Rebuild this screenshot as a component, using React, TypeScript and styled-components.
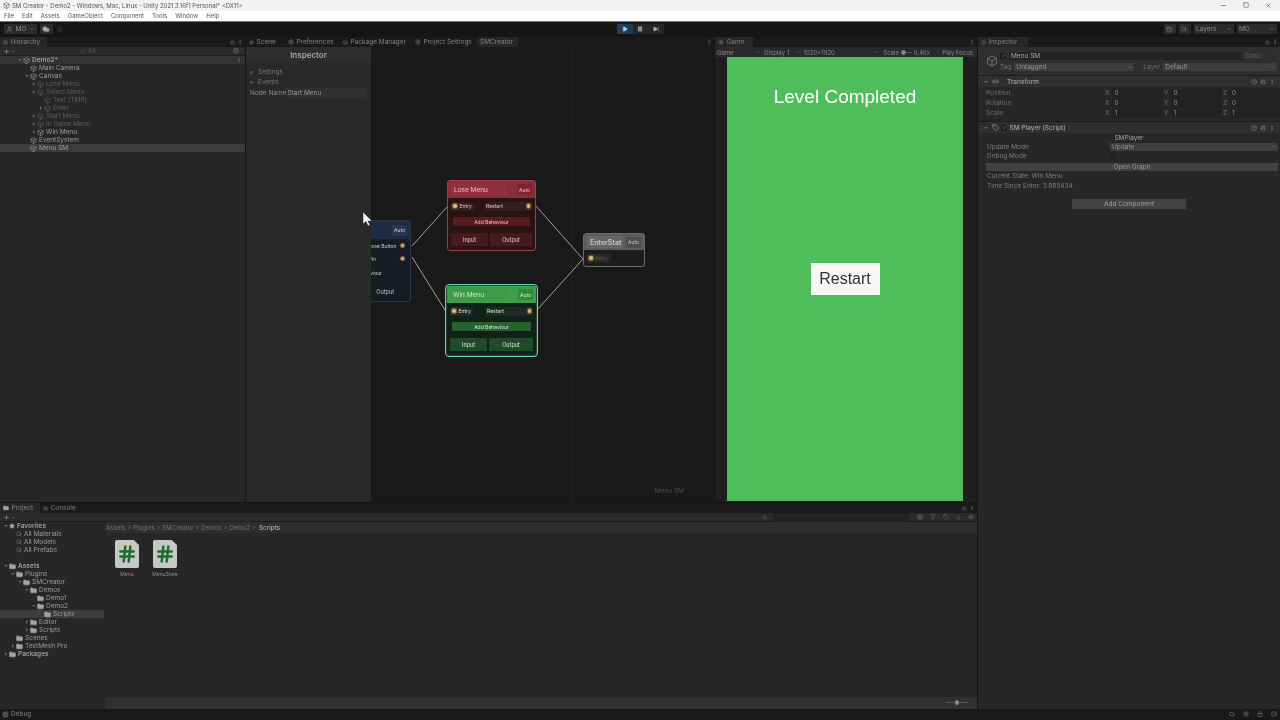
import React from "react";
import styled, { createGlobalStyle } from "styled-components";
import {
  Box,
  Bug,
  Check,
  ChevronDown,
  Cloud,
  Eye,
  Folder,
  Hash,
  History,
  Link2,
  Lock,
  Minus,
  MoreVertical,
  Pause,
  Play,
  Plus,
  Search,
  Settings,
  SkipForward,
  Sliders,
  Square,
  Star,
  Tag,
  User,
  X,
  Grid2x2,
  Filter,
  Layers,
  CircleHelp,
  CircleCheck,
} from "lucide-react";

const GlobalStyle = createGlobalStyle`
  html, body {
    margin: 0;
    width: 1280px;
    height: 720px;
    overflow: hidden;
    background: #191919;
  }
  * { box-sizing: border-box; }
`;

const Root = styled.div`
  width: 1280px;
  height: 720px;
  display: flex;
  flex-direction: column;
  font-family: Inter, "Liberation Sans", sans-serif;
  font-size: 6.5px;
  color: #a0a0a0;
  white-space: nowrap;
  position: relative;
  filter: blur(0.4px);
  will-change: transform;
`;

/* window chrome */
const TitleBar = styled.div`
  height: 11px;
  flex: none;
  background: #f2f2f2;
  display: flex;
  align-items: center;
  padding-left: 3px;
  gap: 2px;
  color: #555;
  font-size: 6px;
`;
const TitleText = styled.span`
  flex: 1;
`;
const WindowButtons = styled.div`
  display: flex;
  gap: 16px;
  padding-right: 8px;
  color: #444;
`;
const MenuBar = styled.div`
  height: 10.5px;
  flex: none;
  background: #fff;
  display: flex;
  align-items: center;
  gap: 8px;
  padding-left: 4px;
  color: #555;
  font-size: 6px;
  border-bottom: 1px solid #777;
`;

const Toolbar = styled.div`
  height: 15.5px;
  flex: none;
  background: #151515;
  display: flex;
  align-items: center;
  padding: 0 0 0 4px;
  position: relative;
`;
const ToolButton = styled.div<{ $w: number; $blue?: boolean }>`
  width: ${(p) => p.$w}px;
  height: 10px;
  background: ${(p) => (p.$blue ? "#1d3a55" : "#2b2b2b")};
  display: flex;
  align-items: center;
  justify-content: space-between;
  padding: 0 2px;
  color: #8e8e8e;
  margin-right: 3px;
`;
const CenterControls = styled.div`
  position: absolute;
  left: 617px;
  top: 2px;
  display: flex;
  background: #222;
`;
const PlayButton = styled.div<{ $active?: boolean }>`
  width: 15.5px;
  height: 10px;
  display: flex;
  align-items: center;
  justify-content: center;
  background: ${(p) => (p.$active ? "#1e3d5a" : "#262626")};
  color: ${(p) => (p.$active ? "#9fd0f0" : "#aaa")};
`;
const Spacer = styled.div`
  flex: 1;
`;

const Workspace = styled.div`
  flex: 1;
  display: flex;
  min-height: 0;
  background: #141414;
`;
const LeftArea = styled.div`
  width: 977px;
  flex: none;
  display: flex;
  flex-direction: column;
`;
const TopArea = styled.div`
  height: 465px;
  flex: none;
  display: flex;
  gap: 1px;
`;

/* shared panel parts */
const Panel = styled.div<{ $w?: number }>`
  ${(p) => (p.$w ? `width: ${p.$w}px; flex: none;` : "flex: 1;")}
  display: flex;
  flex-direction: column;
  background: #272727;
  min-width: 0;
`;
const TabBar = styled.div`
  height: 10px;
  flex: none;
  background: #1a1a1a;
  display: flex;
  align-items: stretch;
  color: #7f7f7f;
`;
const TabItem = styled.div<{ $active?: boolean; $w?: number }>`
  display: flex;
  align-items: center;
  gap: 2.5px;
  padding: 0 3px;
  ${(p) => (p.$w ? `width: ${p.$w}px;` : "")}
  background: ${(p) => (p.$active ? "#272727" : "transparent")};
  color: #828282;
`;
const TabIcons = styled.div`
  margin-left: auto;
  display: flex;
  align-items: center;
  gap: 2px;
  padding-right: 2px;
  color: #777;
`;
const PanelTools = styled.div`
  height: 9px;
  flex: none;
  display: flex;
  align-items: center;
  padding: 0 3px;
  background: #2b2b2b;
  border-bottom: 1px solid #1e1e1e;
  color: #999;
`;
const SearchStub = styled.div<{ $left: number }>`
  margin-left: ${(p) => p.$left}px;
  display: flex;
  align-items: center;
  gap: 3px;
  color: #555;
`;

/* tree rows */
const TreeRow = styled.div<{ $depth: number; $base: number; $selected?: boolean; $dim?: boolean; $bold?: boolean }>`
  height: 8px;
  display: flex;
  align-items: center;
  padding-left: ${(p) => p.$base + p.$depth * 7}px;
  background: ${(p) => (p.$selected ? "#3d3d3d" : "transparent")};
  color: ${(p) => (p.$dim ? "#5c5c5c" : "#9c9c9c")};
  font-weight: ${(p) => (p.$bold ? 600 : 400)};
`;
const Arrow = styled.span<{ $open?: boolean }>`
  width: 6px;
  flex: none;
  display: flex;
  align-items: center;
  justify-content: center;
  &::before {
    content: "";
    display: ${(p) => (p.$open === undefined ? "none" : "block")};
    border-style: solid;
    border-color: transparent;
    ${(p) =>
      p.$open
        ? "border-width: 2.5px 2px 0 2px; border-top-color: #666;"
        : "border-width: 2px 0 2px 2.5px; border-left-color: #666;"}
  }
`;
const RowLabel = styled.span`
  margin-left: 2px;
`;
const RowEnd = styled.span`
  margin-left: auto;
  padding-right: 3px;
  display: flex;
  color: #777;
`;

const hierarchy = [
  { label: "Demo2*", depth: 0, open: true, bold: true, top: true },
  { label: "Main Camera", depth: 1 },
  { label: "Canvas", depth: 1, open: true },
  { label: "Lose Menu", depth: 2, open: false, dim: true },
  { label: "Select Menu", depth: 2, open: false, dim: true },
  { label: "Text (TMP)", depth: 3, dim: true },
  { label: "Enter", depth: 3, open: false, dim: true },
  { label: "Start Menu", depth: 2, open: false, dim: true },
  { label: "In Game Menu", depth: 2, open: false, dim: true },
  { label: "Win Menu", depth: 2, open: false },
  { label: "EventSystem", depth: 1 },
  { label: "Menu SM", depth: 1, selected: true },
];

const projectTree = [
  { label: "Favorites", depth: 0, open: true, bold: true, icon: "star" },
  { label: "All Materials", depth: 1, icon: "search" },
  { label: "All Models", depth: 1, icon: "search" },
  { label: "All Prefabs", depth: 1, icon: "search" },
  { label: "", depth: 0 },
  { label: "Assets", depth: 0, open: true, bold: true, icon: "folder" },
  { label: "Plugins", depth: 1, open: true, icon: "folder" },
  { label: "SMCreator", depth: 2, open: true, icon: "folder" },
  { label: "Demos", depth: 3, open: true, icon: "folder" },
  { label: "Demo1", depth: 4, icon: "folder" },
  { label: "Demo2", depth: 4, open: true, icon: "folder" },
  { label: "Scripts", depth: 5, icon: "folder", selected: true },
  { label: "Editor", depth: 3, open: false, icon: "folder" },
  { label: "Scripts", depth: 3, open: false, icon: "folder" },
  { label: "Scenes", depth: 1, icon: "folder" },
  { label: "TextMesh Pro", depth: 1, open: false, icon: "folder" },
  { label: "Packages", depth: 0, open: false, bold: true, icon: "folder" },
];

const HierarchyRow = styled(TreeRow)<{ $top?: boolean }>`
  background: ${(p) => (p.$selected ? "#3d3d3d" : p.$top ? "#333" : "transparent")};
`;

/* centre panel */
const CenterBody = styled.div`
  flex: 1;
  display: flex;
  min-height: 0;
`;
const GraphSidebar = styled.div`
  width: 125px;
  flex: none;
  background: #292929;
  display: flex;
  flex-direction: column;
`;
const SidebarTitle = styled.div`
  height: 15px;
  display: flex;
  align-items: center;
  justify-content: center;
  background: #2d2d2d;
  font-size: 8px;
  font-weight: 600;
  color: #a5a5a5;
`;
const FoldRow = styled.div<{ $first?: boolean }>`
  height: 10px;
  margin-top: ${(p) => (p.$first ? 5 : 0)}px;
  padding-left: 4px;
  display: flex;
  align-items: center;
  gap: 5px;
  color: #787878;
`;
const FoldMark = styled.span`
  width: 3px;
  height: 3px;
  background: #4a4a4a;
`;
const NodeNameRow = styled.div`
  height: 11px;
  display: flex;
  align-items: center;
  padding-left: 4px;
  color: #8c8c8c;
`;
const NodeNameInput = styled.div`
  flex: 1;
  margin: 0 4px 0 0;
  height: 9px;
  padding-left: 1px;
  background: #303030;
  display: flex;
  align-items: center;
  color: #9a9a9a;
`;

const Graph = styled.div`
  flex: 1;
  position: relative;
  overflow: hidden;
  background: #191919;
`;
const GridLine = styled.div<{ $x: number }>`
  position: absolute;
  left: ${(p) => p.$x}px;
  top: 0;
  bottom: 0;
  width: 1px;
  background: #202020;
`;
const Wires = styled.svg`
  position: absolute;
  inset: 0;
`;
const Watermark = styled.div`
  position: absolute;
  right: 30px;
  bottom: 7px;
  color: #4e4e4e;
`;

type NodeColors = { head: string; title: string; auto: string; body: string; border: string; add: string; btn: string; text: string };
const RED: NodeColors = { head: "#8a2c3b", title: "#93303f", auto: "#80222f", body: "#2a1215", border: "#9c3f4e", add: "#5a1a22", btn: "#481a20", text: "#e0c0c0" };
const GREEN: NodeColors = { head: "#3f9d4b", title: "#3c9a48", auto: "#2f8a3c", body: "#12201a", border: "#1f4a2f", add: "#27612f", btn: "#1f4b28", text: "#cfe8cf" };
const GRAY: NodeColors = { head: "#5c5c5c", title: "#666", auto: "#4e4e4e", body: "#1c1c1c", border: "#6b6b6b", add: "#333", btn: "#333", text: "#c5c5c5" };
const NAVY: NodeColors = { head: "#1f2c44", title: "#1f2c44", auto: "#28364f", body: "#171c24", border: "#2a3548", add: "#1f2530", btn: "#1e2531", text: "#c4cad4" };

const NodeCard = styled.div<{ $x: number; $y: number; $w: number; $c: NodeColors; $glow?: boolean }>`
  position: absolute;
  left: ${(p) => p.$x}px;
  top: ${(p) => p.$y}px;
  width: ${(p) => p.$w}px;
  background: ${(p) => p.$c.body};
  border: 1.5px solid ${(p) => p.$c.border};
  border-radius: 3px;
  color: ${(p) => p.$c.text};
  ${(p) => (p.$glow ? "outline: 1.5px solid #63d6b8; outline-offset: 0.5px;" : "")}
`;
const NodeHead = styled.div<{ $c: NodeColors; $h: number }>`
  height: ${(p) => p.$h}px;
  background: ${(p) => p.$c.head};
  display: flex;
  align-items: center;
  justify-content: space-between;
  padding: 0 3px;
  gap: 3px;
`;
const NodeTitle = styled.div<{ $c: NodeColors; $w: number; $big?: boolean }>`
  width: ${(p) => p.$w}px;
  height: 12px;
  display: flex;
  align-items: center;
  padding-left: 3px;
  background: ${(p) => p.$c.title};
  font-size: ${(p) => (p.$big ? 7 : 6.5)}px;
  font-weight: ${(p) => (p.$big ? 600 : 400)};
`;
const NodeAuto = styled.div<{ $c: NodeColors }>`
  width: 15px;
  height: 11px;
  background: ${(p) => p.$c.auto};
  display: flex;
  align-items: center;
  justify-content: center;
  font-size: 5px;
`;
const PortRow = styled.div`
  height: 16px;
  display: flex;
  align-items: center;
  justify-content: space-between;
  padding: 0 3px;
`;
const Pill = styled.div<{ $w?: number; $faded?: boolean }>`
  display: flex;
  align-items: center;
  gap: 3px;
  height: 9px;
  ${(p) => (p.$w ? `width: ${p.$w}px;` : "")}
  padding: 0 2px;
  background: #ffffff0d;
  border-radius: 2px;
  font-size: 5px;
  color: ${(p) => (p.$faded ? "#6a5f44" : "inherit")};
`;
const Port = styled.span`
  width: 3.5px;
  height: 3.5px;
  border-radius: 50%;
  background: #e2b878;
  box-shadow: 0 0 0 1.2px #6a5a3a;
  flex: none;
  margin-left: auto;
`;
const PortLeft = styled(Port)`
  margin-left: 0;
`;
const AddBar = styled.div<{ $c: NodeColors }>`
  height: 9px;
  margin: 3px 5px 0;
  background: ${(p) => p.$c.add};
  display: flex;
  align-items: center;
  justify-content: center;
  font-size: 5px;
`;
const IoRow = styled.div`
  display: grid;
  grid-template-columns: 37px 1fr;
  gap: 2px;
  margin: 7px 3px 4px;
`;
const IoButton = styled.div<{ $c: NodeColors }>`
  height: 13px;
  background: ${(p) => p.$c.btn};
  display: flex;
  align-items: center;
  justify-content: center;
  font-size: 5.5px;
`;
// rows of the start node, which is cut off by the graph's left edge
const StartLine = styled.div<{ $end: number; $h: number }>`
  height: ${(p) => p.$h}px;
  display: flex;
  align-items: center;
  justify-content: flex-end;
  gap: 4px;
  padding-right: ${(p) => p.$end}px;
  font-size: 5px;
`;
const StartPort = styled(Port)`
  margin-left: 0;
`;
const PortSlot = styled.span<{ $w: number }>`
  width: ${(p) => p.$w}px;
  display: flex;
  justify-content: flex-end;
`;
const StartOutput = styled.div`
  height: 21px;
  padding: 3px 16px 0 0;
  display: flex;
  align-items: center;
  justify-content: flex-end;
  font-size: 5.5px;
`;
const Cursor = styled.svg`
  position: absolute;
  left: 362px;
  top: 211px;
`;

/* game panel */
const GameBar = styled.div`
  height: 10px;
  flex: none;
  display: flex;
  align-items: center;
  padding: 0 0 0 2px;
  background: #2a2a2a;
  font-size: 6px;
  color: #888;
`;
const GameItem = styled.div<{ $w?: number }>`
  ${(p) => (p.$w ? `width: ${p.$w}px;` : "")}
  display: flex;
  align-items: center;
  justify-content: space-between;
  padding-right: 4px;
`;
const GameView = styled.div`
  flex: 1;
  background: #1f1f1f;
  display: flex;
  justify-content: center;
  padding: 0 2px 1px 0;
`;
const GameScreen = styled.div`
  width: 236px;
  background: #4fbe5a;
  display: flex;
  flex-direction: column;
  align-items: center;
`;
const GameTitle = styled.div`
  margin-top: 28px;
  font-family: "Liberation Sans", Arial, sans-serif;
  font-size: 19px;
  line-height: 24px;
  color: #fff;
`;
const RestartButton = styled.div`
  margin-top: 154px;
  width: 69px;
  height: 32px;
  background: #f6f6f6;
  color: #333;
  font-family: "Liberation Sans", Arial, sans-serif;
  font-size: 16px;
  display: flex;
  align-items: center;
  justify-content: center;
`;

/* project panel */
const ProjectPanel = styled(Panel)`
  flex: 1;
  border-top: 1px solid #141414;
`;
const ProjectBody = styled.div`
  flex: 1;
  display: flex;
  min-height: 0;
`;
const ProjectTree = styled.div`
  width: 104px;
  flex: none;
`;
const ProjectFiles = styled.div`
  flex: 1;
  display: flex;
  flex-direction: column;
`;
const Breadcrumb = styled.div`
  height: 11px;
  margin-left: 2px;
  display: flex;
  align-items: center;
  gap: 3px;
  background: #2e2e2e;
  font-size: 6.2px;
  color: #747474;
`;
const CrumbStrong = styled.span`
  color: #9e9e9e;
  font-weight: 600;
`;
const FileGrid = styled.div`
  display: flex;
  gap: 14px;
  padding: 7px 0 0 11px;
`;
const FileItem = styled.div`
  width: 24px;
  display: flex;
  flex-direction: column;
  align-items: center;
  gap: 3px;
  font-size: 5px;
  color: #8a8a8a;
`;
const ScriptIcon = styled.div`
  width: 24px;
  height: 28px;
  background: #c6c9c3;
  border-radius: 2px;
  clip-path: polygon(0 0, 78% 0, 100% 18%, 100% 100%, 0 100%);
  display: flex;
  align-items: center;
  justify-content: center;
  color: #1f6b30;
`;
const ProjectSearch = styled.div`
  position: absolute;
  left: 760px;
  top: 512.5px;
  width: 216px;
  height: 9px;
  display: flex;
  align-items: center;
  padding: 0 2px;
  color: #777;
  gap: 7px;
`;
const SearchField = styled.div`
  flex: 1;
  height: 8px;
  background: #222;
  padding-left: 1px;
`;
const SliderBar = styled.div`
  height: 12px;
  flex: none;
  margin-left: 105px;
  background: #303030;
  display: flex;
  align-items: center;
  justify-content: flex-end;
  padding-right: 9px;
`;
const SliderTrack = styled.div`
  width: 22px;
  height: 1px;
  background: #555;
  display: flex;
  align-items: center;
  justify-content: center;
`;
const SliderThumb = styled.div`
  width: 4px;
  height: 5px;
  border-radius: 50%;
  background: #8c8c8c;
`;

/* inspector */
const InspectorPanel = styled(Panel)`
  border-left: 1px solid #141414;
`;
const ObjectHeader = styled.div`
  height: 28px;
  flex: none;
  display: grid;
  grid-template-columns: 22px 1fr;
  background: #2e2e2e;
`;
const ObjectIcon = styled.div`
  display: flex;
  align-items: center;
  justify-content: center;
  padding-left: 5px;
  color: #9a9a9a;
`;
const ObjectLines = styled.div`
  display: flex;
  flex-direction: column;
  padding: 3px 3px 0 0;
`;
const ObjectLine = styled.div`
  height: 11.5px;
  display: flex;
  align-items: center;
  gap: 3px;
`;
const CheckBox = styled.span`
  width: 6px;
  height: 6px;
  background: #1f1f1f;
  display: flex;
  align-items: center;
  justify-content: center;
  color: #bbb;
  flex: none;
`;
const NameField = styled.div`
  flex: 1;
  height: 8px;
  background: #232323;
  padding-left: 2px;
  display: flex;
  align-items: center;
  color: #a8a8a8;
`;
const StaticLabel = styled.div`
  width: 32px;
  display: flex;
  justify-content: space-between;
  color: #5e5e5e;
`;
const Dropdown = styled.div<{ $w?: number }>`
  ${(p) => (p.$w ? `width: ${p.$w}px;` : "flex: 1;")}
  height: 8px;
  padding: 0 2px;
  background: #3d3d3d;
  display: flex;
  align-items: center;
  justify-content: space-between;
  color: #979797;
`;
const DimLabel = styled.span<{ $pad?: number }>`
  color: #707070;
  padding-left: ${(p) => p.$pad ?? 0}px;
`;
const ComponentHeader = styled.div`
  height: 12px;
  flex: none;
  display: flex;
  align-items: center;
  gap: 2.5px;
  padding: 0 5px;
  background: #2f2f2f;
  border-top: 1px solid #1b1b1b;
  color: #a0a0a0;
  font-weight: 500;
`;
const TransformLabel = styled.span`
  margin-left: 6px;
`;
const HeaderIcons = styled.div`
  margin-left: auto;
  display: flex;
  gap: 3px;
  color: #8a8a8a;
`;
const TransformRows = styled.div`
  padding: 1px 0 3px;
`;
const TransformRow = styled.div`
  height: 10px;
  display: grid;
  grid-template-columns: 119px repeat(3, 59px);
  align-items: center;
  padding-left: 8px;
  color: #6f6f6f;
`;
const AxisField = styled.div`
  display: flex;
  align-items: center;
  gap: 3px;
  padding-right: 1px;
`;
const AxisValue = styled.div`
  flex: 1;
  height: 9px;
  background: #222;
  padding-left: 2px;
  display: flex;
  align-items: center;
  color: #8f8f8f;
`;
const ScriptName = styled.div`
  height: 9px;
  display: flex;
  align-items: center;
  justify-content: center;
  color: #a0a0a0;
`;
const PropRow = styled.div`
  height: 9.5px;
  display: grid;
  grid-template-columns: 123px 1fr;
  align-items: center;
  padding: 0 2px 0 9px;
  color: #7c7c7c;
`;
const DebugToggle = styled.div`
  width: 7px;
  height: 7px;
  background: #232323;
`;
const WideButton = styled.div`
  height: 8px;
  margin: 2px 2px 0 8px;
  background: #414141;
  display: flex;
  align-items: center;
  justify-content: center;
  color: #9a9a9a;
`;
const InfoLine = styled.div`
  height: 10px;
  padding-left: 9px;
  display: flex;
  align-items: center;
  color: #7f7f7f;
`;
const AddComponent = styled.div`
  width: 114px;
  height: 10px;
  margin: 8px 0 0 94px;
  background: #434343;
  color: #a2a2a2;
  display: flex;
  align-items: center;
  justify-content: center;
`;

const StatusBar = styled.div`
  height: 11.5px;
  flex: none;
  background: #191919;
  display: flex;
  align-items: center;
  padding: 0 3px 0 2px;
  gap: 2px;
  color: #868686;
`;
const StatusIcons = styled.div`
  display: flex;
  gap: 8px;
`;

const Icon = ({ kind }: { kind?: string }) => {
  if (kind === "star") return <Star size={6} fill="#a8a8a8" stroke="#a8a8a8" />;
  if (kind === "search") return <Search size={6} stroke="#888" />;
  if (kind === "folder") return <Folder size={7} fill="#a4a4a4" stroke="#a4a4a4" />;
  return null;
};

type NodeProps = { title: string; x: number; y: number; w: number; c: NodeColors; glow?: boolean };

// the big state nodes all share the same inner layout
const StateNode = ({ title, x, y, w, c, glow }: NodeProps) => (
  <NodeCard $x={x} $y={y} $w={w} $c={c} $glow={glow}>
    <NodeHead $c={c} $h={17}>
      <NodeTitle $c={c} $w={56}>{title}</NodeTitle>
      <NodeAuto $c={c}>Auto</NodeAuto>
    </NodeHead>
    <PortRow>
      <Pill $w={23}><PortLeft />Entry</Pill>
      <Pill $w={48}>Restart<Port /></Pill>
    </PortRow>
    <AddBar $c={c}>Add Behaviour</AddBar>
    <IoRow>
      <IoButton $c={c}>Input</IoButton>
      <IoButton $c={c}>Output</IoButton>
    </IoRow>
  </NodeCard>
);

const App = () => {
  return (
    <Root>
      <GlobalStyle />
      <TitleBar>
        <Box size={7} />
        <TitleText>SM Creator - Demo2 - Windows, Mac, Linux - Unity 2021.3.16f1 Personal* &lt;DX11&gt;</TitleText>
        <WindowButtons>
          <Minus size={7} />
          <Square size={6} />
          <X size={7} />
        </WindowButtons>
      </TitleBar>
      <MenuBar>
        {["File", "Edit", "Assets", "GameObject", "Component", "Tools", "Window", "Help"].map((m) => (
          <span key={m}>{m}</span>
        ))}
      </MenuBar>

      <Toolbar>
        <ToolButton $w={33}><User size={7} />MO<ChevronDown size={6} /></ToolButton>
        <ToolButton $w={13}><Cloud size={8} fill="#aaa" /></ToolButton>
        <Settings size={7} stroke="#444" />
        <CenterControls>
          <PlayButton $active><Play size={6} fill="#9fd0f0" /></PlayButton>
          <PlayButton><Pause size={6} fill="#aaa" /></PlayButton>
          <PlayButton><SkipForward size={6} fill="#aaa" /></PlayButton>
        </CenterControls>
        <Spacer />
        <ToolButton $w={12}><History size={7} /></ToolButton>
        <ToolButton $w={12}><Search size={6} /></ToolButton>
        <ToolButton $w={40}>Layers<ChevronDown size={6} /></ToolButton>
        <ToolButton $w={40}>MO<ChevronDown size={6} /></ToolButton>
      </Toolbar>

      <Workspace>
        <LeftArea>
          <TopArea>
            <Panel $w={245}>
              <TabBar>
                <TabItem $active $w={47}><Sliders size={5} />Hierarchy</TabItem>
                <TabIcons><Lock size={5} /><MoreVertical size={6} /></TabIcons>
              </TabBar>
              <PanelTools>
                <Plus size={7} /><ChevronDown size={5} />
                <SearchStub $left={65}><Search size={5} />All</SearchStub>
                <RowEnd><Grid2x2 size={6} /></RowEnd>
              </PanelTools>
              {hierarchy.map((r) => (
                <HierarchyRow key={r.label} $base={17} $depth={r.depth} $dim={r.dim} $bold={r.bold} $selected={r.selected} $top={r.top}>
                  <Arrow $open={r.open} />
                  <Box size={7} />
                  <RowLabel>{r.label}</RowLabel>
                  {r.top && <RowEnd><MoreVertical size={6} /></RowEnd>}
                </HierarchyRow>
              ))}
            </Panel>

            <Panel $w={468}>
              <TabBar>
                <TabItem $w={39}><Hash size={5} />Scene</TabItem>
                <TabItem $w={55}><Settings size={6} />Preferences</TabItem>
                <TabItem $w={72}><Layers size={5} />Package Manager</TabItem>
                <TabItem $w={65}><Settings size={6} />Project Settings</TabItem>
                <TabItem $active $w={41}>SMCreator</TabItem>
                <TabIcons><MoreVertical size={6} /></TabIcons>
              </TabBar>
              <CenterBody>
                <GraphSidebar>
                  <SidebarTitle>Inspector</SidebarTitle>
                  <FoldRow $first><FoldMark />Settings</FoldRow>
                  <FoldRow><FoldMark />Events</FoldRow>
                  <NodeNameRow>Node Name<NodeNameInput>Start Menu</NodeNameInput></NodeNameRow>
                </GraphSidebar>
                <Graph>
                  <GridLine $x={200} />
                  <Wires width="343" height="454">
                    <g stroke="#a8a488" strokeWidth="1" fill="none">
                      <line x1="41" y1="199" x2="76" y2="160" />
                      <line x1="41" y1="210" x2="74" y2="263" />
                      <line x1="165" y1="159" x2="212" y2="212" />
                      <line x1="166" y1="263" x2="212" y2="212" />
                    </g>
                  </Wires>

                  <NodeCard $x={-30} $y={173} $w={70} $c={NAVY}>
                    <NodeHead $c={NAVY} $h={18}>
                      <span />
                      <NodeAuto $c={NAVY}>Auto</NodeAuto>
                    </NodeHead>
                    <StartLine $h={13} $end={6}>Lose Button<StartPort /></StartLine>
                    <StartLine $h={13} $end={6}>Win<PortSlot $w={24}><StartPort /></PortSlot></StartLine>
                    <StartLine $h={15} $end={28}>Add Behaviour</StartLine>
                    <StartOutput>Output</StartOutput>
                  </NodeCard>
                  <StateNode title="Lose Menu" x={76} y={133} w={89} c={RED} />
                  <StateNode title="Win Menu" x={75} y={238} w={91} c={GREEN} glow />
                  <NodeCard $x={212} $y={186} $w={62} $c={GRAY}>
                    <NodeHead $c={GRAY} $h={16}>
                      <NodeTitle $c={GRAY} $w={36} $big>EnterStat</NodeTitle>
                      <NodeAuto $c={GRAY}>Auto</NodeAuto>
                    </NodeHead>
                    <PortRow>
                      <Pill $w={24} $faded><PortLeft />Entry</Pill>
                    </PortRow>
                  </NodeCard>
                  <Watermark>Menu SM</Watermark>
                </Graph>
              </CenterBody>
            </Panel>

            <Panel>
              <TabBar>
                <TabItem $active $w={38}><Eye size={6} />Game</TabItem>
                <TabIcons><MoreVertical size={6} /></TabIcons>
              </TabBar>
              <GameBar>
                <GameItem $w={48}>Game<ChevronDown size={5} /></GameItem>
                <GameItem $w={40}>Display 1<ChevronDown size={5} /></GameItem>
                <GameItem $w={81}>1020x1920<ChevronDown size={5} /></GameItem>
                <GameItem $w={60}>Scale ●— 0.46x</GameItem>
                <GameItem>Play Focus</GameItem>
              </GameBar>
              <GameView>
                <GameScreen>
                  <GameTitle>Level Completed</GameTitle>
                  <RestartButton>Restart</RestartButton>
                </GameScreen>
              </GameView>
            </Panel>
          </TopArea>

          <ProjectPanel>
            <TabBar>
              <TabItem $active $w={40}><Folder size={6} fill="#aaa" />Project</TabItem>
              <TabItem><Sliders size={5} />Console</TabItem>
              <TabIcons><Lock size={5} /><MoreVertical size={6} /></TabIcons>
            </TabBar>
            <PanelTools><Plus size={7} /><ChevronDown size={5} /></PanelTools>
            <ProjectBody>
              <ProjectTree>
                {projectTree.map((r, i) => (
                  <TreeRow key={i} $base={3} $depth={r.depth} $bold={r.bold} $selected={r.selected}>
                    <Arrow $open={r.open} />
                    <Icon kind={r.icon} />
                    <RowLabel>{r.label}</RowLabel>
                  </TreeRow>
                ))}
              </ProjectTree>
              <ProjectFiles>
                <Breadcrumb>
                  Assets &gt; Plugins &gt; SMCreator &gt; Demos &gt; Demo2 &gt; <CrumbStrong>Scripts</CrumbStrong>
                </Breadcrumb>
                <FileGrid>
                  <FileItem><ScriptIcon><Hash size={20} strokeWidth={3} /></ScriptIcon>Menu</FileItem>
                  <FileItem><ScriptIcon><Hash size={20} strokeWidth={3} /></ScriptIcon>MenuState</FileItem>
                </FileGrid>
              </ProjectFiles>
            </ProjectBody>
            <SliderBar>
              <SliderTrack><SliderThumb /></SliderTrack>
            </SliderBar>
          </ProjectPanel>
        </LeftArea>

        <InspectorPanel>
          <TabBar>
            <TabItem $active $w={50}><CircleHelp size={5} />Inspector</TabItem>
            <TabIcons><Lock size={5} /><MoreVertical size={6} /></TabIcons>
          </TabBar>
          <ObjectHeader>
            <ObjectIcon><Box size={12} strokeWidth={1.2} /></ObjectIcon>
            <ObjectLines>
              <ObjectLine>
                <CheckBox><Check size={5} /></CheckBox>
                <NameField>Menu SM</NameField>
                <StaticLabel>Static<ChevronDown size={5} /></StaticLabel>
              </ObjectLine>
              <ObjectLine>
                <DimLabel>Tag</DimLabel>
                <Dropdown $w={120}>Untagged<ChevronDown size={5} /></Dropdown>
                <DimLabel $pad={6}>Layer</DimLabel>
                <Dropdown>Default<ChevronDown size={5} /></Dropdown>
              </ObjectLine>
            </ObjectLines>
          </ObjectHeader>
          <ComponentHeader>
            <Arrow $open />
            <Link2 size={7} />
            <TransformLabel>Transform</TransformLabel>
            <HeaderIcons><CircleHelp size={6} /><Sliders size={6} /><MoreVertical size={6} /></HeaderIcons>
          </ComponentHeader>
          <TransformRows>
            {[
              ["Position", "0", "0", "0"],
              ["Rotation", "0", "0", "0"],
              ["Scale", "1", "1", "1"],
            ].map(([name, xv, yv, zv]) => (
              <TransformRow key={name}>
                <span>{name}</span>
                <AxisField>X<AxisValue>{xv}</AxisValue></AxisField>
                <AxisField>Y<AxisValue>{yv}</AxisValue></AxisField>
                <AxisField>Z<AxisValue>{zv}</AxisValue></AxisField>
              </TransformRow>
            ))}
          </TransformRows>
          <ComponentHeader>
            <Arrow $open />
            <Tag size={7} />
            <CheckBox><Check size={5} /></CheckBox>
            SM Player (Script)
            <HeaderIcons><CircleHelp size={6} /><Sliders size={6} /><MoreVertical size={6} /></HeaderIcons>
          </ComponentHeader>
          <ScriptName>SMPlayer</ScriptName>
          <PropRow>Update Mode<Dropdown>Update<ChevronDown size={5} /></Dropdown></PropRow>
          <PropRow>Debug Mode<DebugToggle /></PropRow>
          <WideButton>Open Graph</WideButton>
          <InfoLine>Current State: Win Menu</InfoLine>
          <InfoLine>Time Since Enter: 3.885434</InfoLine>
          <AddComponent>Add Component</AddComponent>
        </InspectorPanel>
      </Workspace>

      <ProjectSearch>
        <Search size={5} />
        <SearchField />
        <Grid2x2 size={6} /><Filter size={6} /><Tag size={6} /><Star size={5} /><Eye size={6} />
      </ProjectSearch>

      <StatusBar>
        <Bug size={7} />Debug
        <Spacer />
        <StatusIcons>
          <Cloud size={6} /><Settings size={6} /><Lock size={6} /><CircleCheck size={6} />
        </StatusIcons>
      </StatusBar>

      <Cursor width="11" height="16" viewBox="0 0 11 16">
        <path d="M1 1 L1 13 L4 10.5 L6 15 L8 14 L6 10 L10 10 Z" fill="#f5f5f5" stroke="#222" strokeWidth="0.5" />
      </Cursor>
    </Root>
  );
};

export default App;
